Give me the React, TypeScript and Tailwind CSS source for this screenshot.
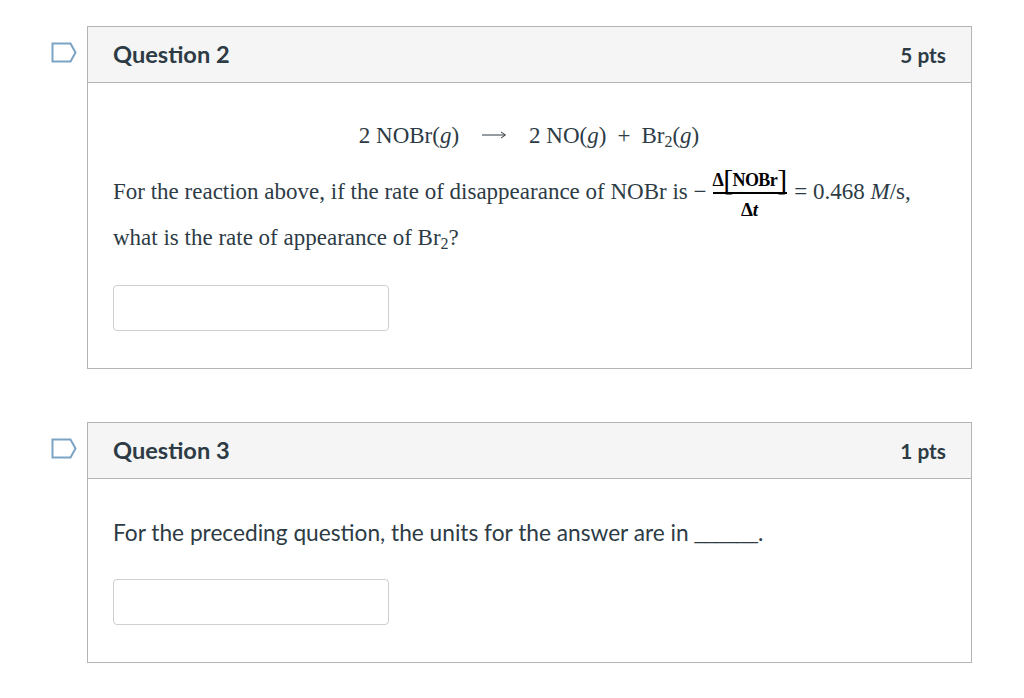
import React from "react";

const lato = "font-['Lato','sans-serif']";
const serif = "font-['Liberation_Serif','serif']";

function Flag() {
  return (
    <div className="w-[36px] shrink-0 pt-[16px]">
      <svg width="26" height="21" viewBox="0 0 26 21" className="block">
        <path d="M1.5 1.5H19.5L24.5 10.5L19.5 19.5H1.5Z" fill="none" stroke="#7ba3c4" strokeWidth="2" />
      </svg>
    </div>
  );
}

function Header({ title, pts }: { title: string; pts: string }) {
  return (
    <div className={`flex h-[56px] items-center justify-between border-b border-[#b4b4b4] bg-[#f5f5f5] px-[25px] ${lato} font-bold text-[#2d3b45]`}>
      <span className="text-[23.6px]">{title}</span>
      <span className="text-[20.8px]">{pts}</span>
    </div>
  );
}

function Answer() {
  return <div className="h-[46px] w-[276px] rounded-[4px] border border-[#cfcfcf] bg-white" />;
}

export default function App() {
  return (
    <div className="h-[698px] w-[1024px] overflow-hidden bg-white pt-[26px] text-[#2d3b45]">
      <div className="flex pl-[51px]">
        <Flag />
        <div className="h-[343px] w-[885px] border border-[#b4b4b4]">
          <Header title="Question 2" pts="5 pts" />
          <div className={`${serif} px-[25px] text-[23px]`}>
            <div className="flex h-[32px] translate-y-[36px] items-center justify-center pr-[1px] whitespace-pre leading-none">
              <span>2 NOBr(<i>g</i>)</span>
              <svg width="24" height="10" viewBox="0 0 24 10" className="mx-[23px] block">
                <path d="M0 5H23M19 2L23.5 5L19 8" fill="none" stroke="#2d3b45" strokeWidth="1" />
              </svg>
              <span>2 NO(<i>g</i>)</span>
              <span className="mx-[11px]">+</span>
              <span>Br<sub className="text-[16px]">2</sub>(<i>g</i>)</span>
            </div>
            <div className="mt-[51px] flex h-[54px] items-center whitespace-pre">
              <span className="-translate-y-[1px]">For the reaction above, if the rate of disappearance of NOBr is −</span>
              <span className="ml-[6px] flex w-[74px] flex-col items-center font-bold text-black">
                <span className="flex h-[27px] w-full items-center justify-center border-b-2 border-black text-[18px] leading-none tracking-[-0.6px]">
                  Δ<span className="text-[30px] font-normal leading-none">[</span>NOBr<span className="text-[30px] font-normal leading-none">]</span>
                </span>
                <span className="translate-y-[3px] text-[19px] leading-[25px]">Δ<i>t</i></span>
              </span>
              <span className="ml-[2px] -translate-y-[1px]"> = 0.468 <i>M</i>/s,</span>
            </div>
            <div className="mt-[4px] h-[28px] leading-[28px]">
              what is the rate of appearance of Br<sub className="text-[16px]">2</sub>?
            </div>
            <div className="mt-[33px]">
              <Answer />
            </div>
          </div>
        </div>
      </div>
      <div className="mt-[53px] flex pl-[51px]">
        <Flag />
        <div className="h-[241px] w-[885px] border border-[#b4b4b4]">
          <Header title="Question 3" pts="1 pts" />
          <div className={`${lato} px-[25px] pt-[38px] text-[22.7px] leading-[32px]`}>
            <div>For the preceding question, the units for the answer are in <span className="inline-block -translate-y-[2px] font-['Liberation_Sans','sans-serif'] text-[19px]">______</span>.</div>
            <div className="mt-[28px]">
              <Answer />
            </div>
          </div>
        </div>
      </div>
    </div>
  );
}
